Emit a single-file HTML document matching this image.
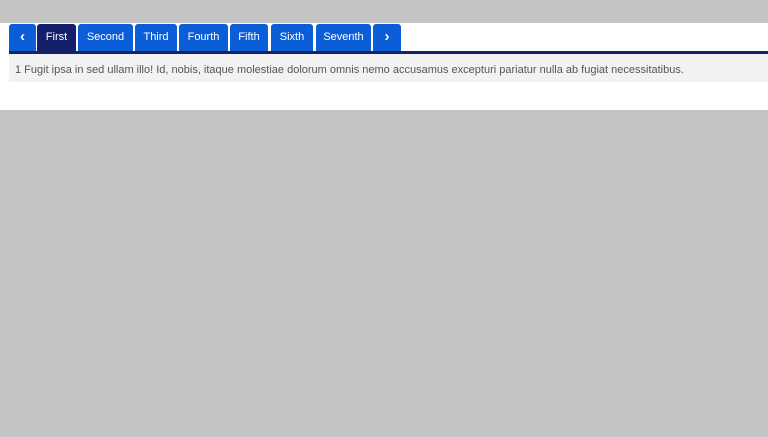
<!DOCTYPE html>
<html><head><style>
body{margin:0;width:768px;height:437px;background:#c4c4c4;font-family:"Liberation Sans",sans-serif;overflow:hidden;position:relative}
.panel{position:absolute;left:0;top:23px;width:768px;height:87px;background:#fff}
.t{position:absolute;top:24px;height:27px;background:#0b5ed7;color:#fff;font-size:11px;line-height:27px;text-align:center;border-radius:3px 3px 0 0}
.a{background:#14206b}
.ar{font-weight:bold;font-size:15px;line-height:26px}
.line{position:absolute;left:9px;top:51px;width:759px;height:3px;background:#16226b}
.c{position:absolute;left:9px;top:54px;width:759px;height:28px;background:#f2f2f2;color:#555;font-size:11px;line-height:32px;text-indent:6px;letter-spacing:0px}
</style></head><body>
<div class="panel"></div>
<div class="t ar" style="left:9px;width:27px">‹</div>
<div class="t a" style="left:37px;width:39px">First</div>
<div class="t" style="left:78px;width:55px">Second</div>
<div class="t" style="left:135px;width:42px">Third</div>
<div class="t" style="left:179px;width:49px">Fourth</div>
<div class="t" style="left:230px;width:38px">Fifth</div>
<div class="t" style="left:271px;width:42px">Sixth</div>
<div class="t" style="left:316px;width:55px">Seventh</div>
<div class="t ar" style="left:373px;width:28px">›</div>
<div class="line"></div>
<div class="c">1 Fugit ipsa in sed ullam illo! Id, nobis, itaque molestiae dolorum omnis nemo accusamus excepturi pariatur nulla ab fugiat necessitatibus.</div>
</body></html>
